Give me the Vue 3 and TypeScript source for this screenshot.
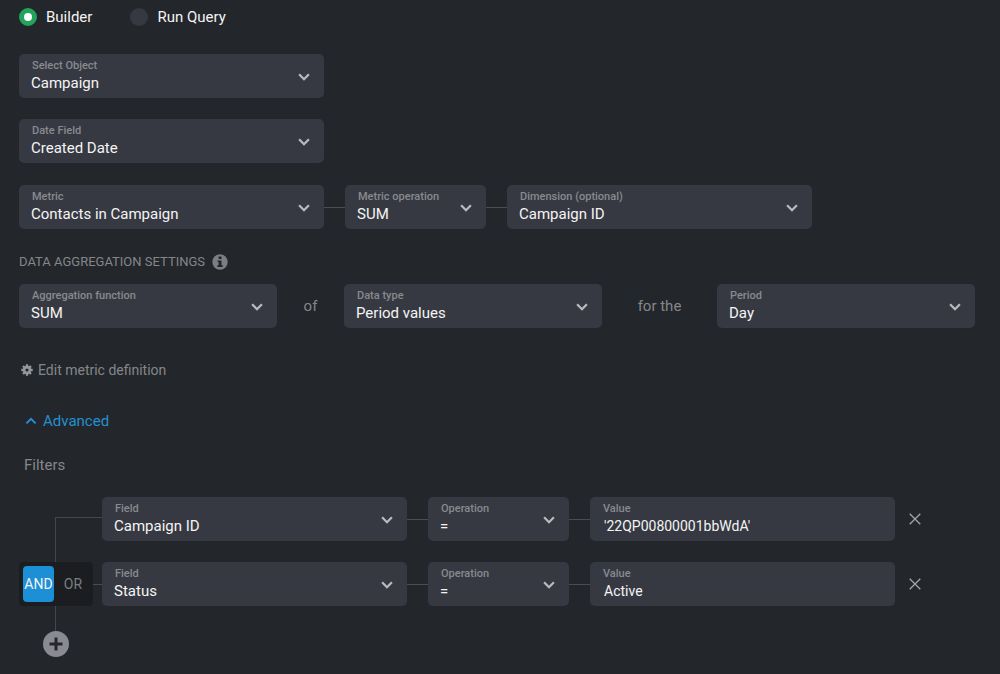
<script setup lang="ts">
import { computed, defineComponent, h, ref } from 'vue'

interface FilterRow {
  id: number
  field: string
  operation: string
  value: string
}

const mode = ref<'builder' | 'query'>('builder')
const joiner = ref<'AND' | 'OR'>('AND')
const advancedOpen = ref(true)

const sourceFields = [
  { id: 'object', label: 'Select Object', value: 'Campaign' },
  { id: 'date', label: 'Date Field', value: 'Created Date' },
]

const metricFields = [
  { id: 'metric', label: 'Metric', value: 'Contacts in Campaign' },
  { id: 'metric-op', label: 'Metric operation', value: 'SUM' },
  { id: 'dimension', label: 'Dimension (optional)', value: 'Campaign ID' },
]

const aggregationFields = [
  { id: 'agg-fn', label: 'Aggregation function', value: 'SUM', joint: 'of' },
  { id: 'data-type', label: 'Data type', value: 'Period values', joint: 'for the' },
  { id: 'period', label: 'Period', value: 'Day', joint: '' },
]

const filters = ref<FilterRow[]>([
  { id: 1, field: 'Campaign ID', operation: '=', value: "'22QP00800001bbWdA'" },
  { id: 2, field: 'Status', operation: '=', value: 'Active' },
])

const nextId = computed(() => Math.max(0, ...filters.value.map((f) => f.id)) + 1)

function addFilter() {
  filters.value.push({ id: nextId.value, field: 'Status', operation: '=', value: '' })
}

function removeFilter(id: number) {
  filters.value = filters.value.filter((f) => f.id !== id)
}

const SelectField = defineComponent({
  props: {
    id: { type: String, required: true },
    label: { type: String, required: true },
    value: { type: String, required: true },
  },
  setup(props) {
    return () =>
      h('div', { class: 'field' }, [
        h('label', { for: props.id }, props.label),
        h('select', { id: props.id }, [h('option', props.value)]),
        h('svg', { class: 'chevron', viewBox: '0 0 12 8', 'aria-hidden': 'true' }, [
          h('path', { d: 'M1.1 1.3 6 6.2l4.9-4.9' }),
        ]),
      ])
  },
})
</script>

<template>
  <main class="page">
    <div class="modes" role="radiogroup" aria-label="Mode">
      <label class="mode"><input v-model="mode" type="radio" name="mode" value="builder" />Builder</label>
      <label class="mode"><input v-model="mode" type="radio" name="mode" value="query" />Run Query</label>
    </div>

    <div class="sources">
      <div v-for="f in sourceFields" :key="f.id" class="metric-grid">
        <SelectField :id="f.id" :label="f.label" :value="f.value" />
      </div>
    </div>

    <div class="metric-grid metrics">
      <template v-for="(f, i) in metricFields" :key="f.id">
        <span v-if="i > 0" class="link-line"></span>
        <SelectField :id="f.id" :label="f.label" :value="f.value" />
      </template>
    </div>

    <h2 class="heading">
      DATA AGGREGATION SETTINGS
      <svg class="info" viewBox="0 0 16 16" aria-hidden="true">
        <circle cx="8" cy="8" r="7.7" fill="#7d7e83" />
        <path d="M6.6 2.6h2.9v2.5H6.6zM5.6 6.4h3.9v4.9h1.2v1.6H5.4v-1.6h1.2V8h-1z" fill="#23262a" />
      </svg>
    </h2>

    <div class="agg-grid">
      <template v-for="f in aggregationFields" :key="f.id">
        <SelectField :id="f.id" :label="f.label" :value="f.value" />
        <span v-if="f.joint" class="joint">{{ f.joint }}</span>
      </template>
    </div>

    <button type="button" class="edit">
      <svg class="gear" viewBox="0 0 12 12" aria-hidden="true">
        <circle cx="6" cy="6" r="2.9" fill="none" stroke="#96979b" stroke-width="2.6" />
        <path
          d="M6 .3v2M6 9.7v2M.3 6h2M9.7 6h2M2 2l1.5 1.5M8.5 8.5 10 10M10 2 8.5 3.5M3.5 8.5 2 10"
          stroke="#96979b"
          stroke-width="2.3"
        />
      </svg>
      Edit metric definition
    </button>

    <button type="button" class="advanced" :aria-expanded="advancedOpen" @click="advancedOpen = !advancedOpen">
      <svg class="caret" viewBox="0 0 12 8" aria-hidden="true"><path d="M1.4 6.4 6 1.8l4.6 4.6" /></svg>
      Advanced
    </button>

    <section v-if="advancedOpen">
      <h3 class="subheading">Filters</h3>
      <div class="filters">
        <div class="tree">
          <span class="elbow"></span>
          <div class="joiner-row">
            <div class="joiner" role="group" aria-label="Combine filters">
              <button type="button" :class="{ on: joiner === 'AND' }" @click="joiner = 'AND'">AND</button>
              <button type="button" :class="{ on: joiner === 'OR' }" @click="joiner = 'OR'">OR</button>
            </div>
            <span class="link-line"></span>
          </div>
          <span class="stem"></span>
          <button type="button" class="add" aria-label="Add filter" @click="addFilter">
            <svg viewBox="0 0 26 26" aria-hidden="true"><path d="M13 6.5v13M6.5 13h13" /></svg>
          </button>
        </div>

        <div class="rows">
          <div v-for="f in filters" :key="f.id" class="filter-grid">
            <SelectField :id="`field-${f.id}`" label="Field" :value="f.field" />
            <span class="link-line"></span>
            <SelectField :id="`op-${f.id}`" label="Operation" :value="f.operation" />
            <span class="link-line"></span>
            <div class="field">
              <label :for="`value-${f.id}`">Value</label>
              <input :id="`value-${f.id}`" v-model="f.value" type="text" spellcheck="false" />
            </div>
            <button type="button" class="remove" aria-label="Remove filter" @click="removeFilter(f.id)">
              <svg viewBox="0 0 12 12" aria-hidden="true"><path d="M.7.7l10.6 10.6M11.3.7.7 11.3" /></svg>
            </button>
          </div>
        </div>
      </div>
    </section>
  </main>
</template>

<style scoped>
.page {
  padding: 8px 25px 16px 19px;
  font-family: Roboto, 'Liberation Sans', sans-serif;
  font-size: 15px;
  color: #f4f4f5;
}

button {
  padding: 0;
  border: 0;
  background: none;
  font: inherit;
  color: inherit;
  cursor: pointer;
}

.modes {
  display: flex;
  gap: 38px;
  height: 18px;
}

.mode {
  display: flex;
  align-items: center;
  gap: 9px;
}

.mode input {
  appearance: none;
  width: 18px;
  height: 18px;
  margin: 0;
  border-radius: 50%;
  background: #373942;
}

.mode input:checked {
  border: 5px solid #23a45c;
  background: #fff;
}

.sources {
  display: grid;
  gap: 21px;
  margin-top: 28px;
}

.metric-grid {
  display: grid;
  grid-template-columns: 305fr 21px 141fr 21px 305fr 163fr;
}

.metrics {
  margin-top: 22px;
}

.agg-grid {
  display: grid;
  grid-template-columns: 258fr 67px 258fr 115px 258fr;
  margin-top: 10px;
}

.filter-grid {
  display: grid;
  grid-template-columns: 305fr 21px 141fr 21px 305fr 80px;
}

.page :deep(.field) {
  position: relative;
  min-width: 0;
  height: 44px;
  border-radius: 5px;
  background: #373942;
}

.page :deep(.field label) {
  position: absolute;
  top: 5px;
  left: 13px;
  font-size: 11px;
  line-height: 14px;
  font-weight: 500;
  color: #898a8f;
  pointer-events: none;
}

.page :deep(.field select),
.page :deep(.field input) {
  appearance: none;
  box-sizing: border-box;
  width: 100%;
  height: 100%;
  margin: 0;
  padding: 14px 34px 0 12px;
  border: 0;
  border-radius: 5px;
  background: transparent;
  font: inherit;
  color: #f4f4f5;
}

.page :deep(.field input) {
  padding: 13px 14px 0;
  font-size: 14px;
}

.page :deep(.chevron) {
  position: absolute;
  top: 19px;
  right: 14px;
  width: 12px;
  height: 8px;
  fill: none;
  stroke: #b9bac0;
  stroke-width: 2.3;
  pointer-events: none;
}

.link-line {
  align-self: center;
  height: 1px;
  background: #4b4d52;
}

.heading,
.subheading {
  margin: 20px 0 0;
  font-weight: 400;
  line-height: 24px;
  color: #85868a;
}

.heading {
  display: flex;
  align-items: center;
  gap: 7px;
  margin-top: 21px;
  font-size: 13px;
}

.info {
  width: 16px;
  height: 16px;
}

.joint {
  align-self: center;
  text-align: center;
  color: #85868a;
}

.edit,
.advanced {
  display: flex;
  align-items: center;
  gap: 5px;
  line-height: 24px;
}

.edit {
  margin: 30px 0 0 2px;
  font-size: 14px;
  color: #85868a;
}

.gear {
  width: 12px;
  height: 12px;
}

.advanced {
  gap: 6px;
  margin: 27px 0 0 6px;
  color: #2390d1;
}

.caret {
  width: 12px;
  height: 8px;
  fill: none;
  stroke: #2390d1;
  stroke-width: 2;
}

.subheading {
  margin-left: 5px;
  font-size: 15px;
}

.filters {
  display: grid;
  grid-template-columns: 83px 1fr;
  margin-top: 20px;
}

.rows {
  display: grid;
  align-content: start;
  gap: 21px;
}

.tree {
  display: flex;
  flex-direction: column;
  align-items: flex-start;
}

.elbow {
  box-sizing: border-box;
  align-self: stretch;
  height: 45px;
  margin: 20px 0 0 36px;
  border: solid #45474b;
  border-width: 1px 0 0 1px;
}

.joiner-row {
  display: flex;
  align-self: stretch;
}

.joiner-row .link-line {
  flex: 1;
}

.joiner {
  display: flex;
  padding: 4px 1px 4px 4px;
  border-radius: 4px;
  background: #1b1d21;
}

.joiner button {
  width: 38px;
  height: 36px;
  border-radius: 4px;
  font-size: 14px;
  color: #7d7e82;
}

.joiner button:first-child {
  width: 31px;
}

.joiner button.on {
  background: #1c8fd6;
  color: #f4f4f5;
}

.stem {
  width: 1px;
  height: 25px;
  margin-left: 36px;
  background: #45474b;
}

.add {
  display: flex;
  width: 26px;
  height: 26px;
  margin-left: 24px;
  border-radius: 50%;
  background: #8a8b92;
}

.add svg {
  width: 26px;
  height: 26px;
  stroke: #23262a;
  stroke-width: 3;
}

.remove {
  display: flex;
  align-items: center;
  justify-content: center;
  width: 40px;
}

.remove svg {
  width: 12px;
  height: 12px;
  stroke: #a5a6aa;
  stroke-width: 1.3;
}
</style>

<style>
body {
  background: #23262a;
}
</style>
